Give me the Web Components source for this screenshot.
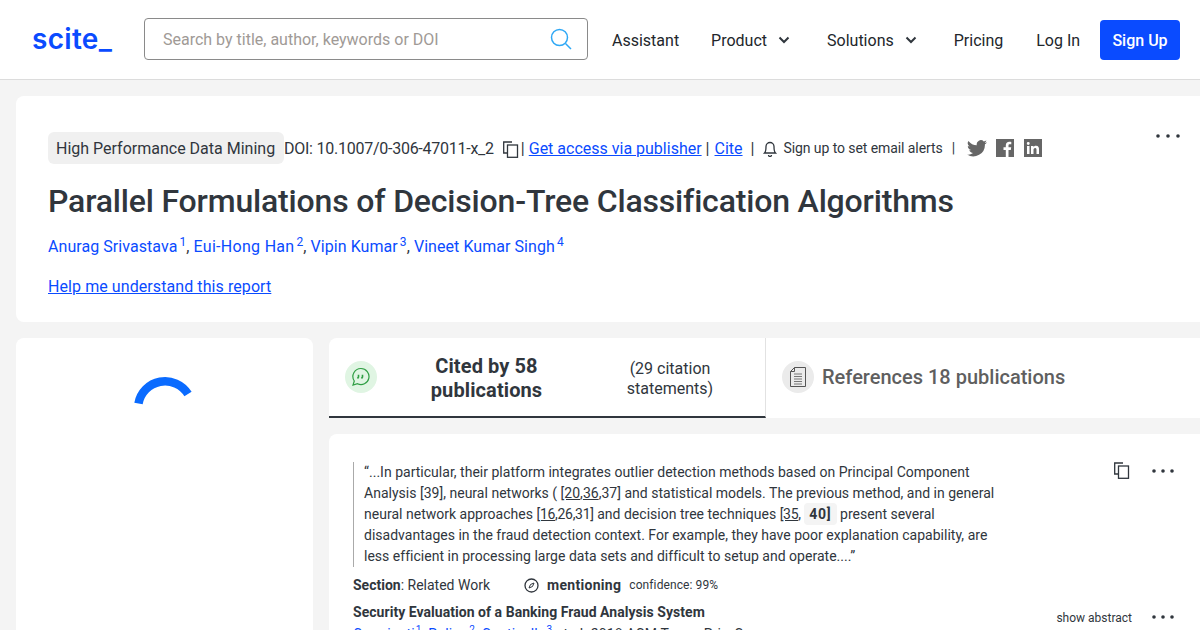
<!DOCTYPE html>
<html>
<head>
<meta charset="utf-8">
<title>scite</title>
<style>
  html, body { margin: 0; height: 630px; overflow: hidden; background: #f4f4f4; }
  body { font-family: Roboto, "Liberation Sans", sans-serif; color: #30363d; }
  .main { display: flex; flex-direction: column; gap: 16px; padding: 16px 0 0 16px; }
  .lower { display: flex; gap: 16px; align-items: flex-start; }
  .right { width: 871px; display: flex; flex-direction: column; gap: 16px; }
</style>
</head>
<body>
<site-header></site-header>
<div class="main">
  <paper-card></paper-card>
  <div class="lower">
    <loading-panel></loading-panel>
    <div class="right">
      <cite-tabs></cite-tabs>
      <citation-card></citation-card>
    </div>
  </div>
</div>

<script>
// Shared icons
const dots = (gap) => `<svg width="26" height="6" viewBox="0 0 26 6" fill="#30363d"><circle cx="${13 - gap}" cy="3" r="1.800"/><circle cx="13" cy="3" r="1.800"/><circle cx="${13 + gap}" cy="3" r="1.800"/></svg>`;
const chevron = `<svg width="14" height="10" viewBox="0 0 14 10" fill="none" stroke="#30363d" stroke-width="2"><path d="M2.500 2.500 7 7l4.500-4.500"/></svg>`;
const copyIcon = `<svg width="17" height="17" viewBox="0 0 17 17" fill="none" stroke="#30363d" stroke-width="1.300"><path d="M10 1H1.700v11H5"/><rect x="5.500" y="4" width="10" height="12.300"/></svg>`;

class SiteHeader extends HTMLElement {
    constructor() {
        super();
        this.attachShadow({ mode: "open" });
        this.shadowRoot.innerHTML = `
        <style>
            :host { display: flex; align-items: center; height: 79px; background: #fff; border-bottom: 1px solid #dcdcdc; padding: 0 20px 0 32px; color: #22262b; font-size: 16px; }
            .logo { width: 112px; font: 600 28px/1 Inter, sans-serif; letter-spacing: .3px; color: #0a4bff; margin-top: -1px; }
            .search { width: 444px; height: 42px; margin-top: -1px; box-sizing: border-box; border: 1px solid #8a8a8a; border-radius: 4px; display: flex; align-items: center; justify-content: space-between; padding: 0 15px 0 18px; color: #a09a96; }
            nav { display: flex; align-items: center; margin-left: 24px; padding-top: 1px; flex: 1; }
            nav span { display: flex; align-items: center; gap: 10px; }
            .btn { margin-left: auto; width: 80px; height: 40px; border-radius: 4px; background: #0a4bff; color: #fff; font-weight: 500; display: flex; align-items: center; justify-content: center; }
        </style>
        <div class="logo">scite_</div>
        <div class="search">
            <span>Search by title, author, keywords or DOI</span>
            <svg width="22" height="22" viewBox="0 0 22 22" fill="none" stroke="#2fa8f5" stroke-width="1.500"><circle cx="9.500" cy="9.500" r="8"/><path d="M15.500 15.500 21 21"/></svg>
        </div>
        <nav>
            <span>Assistant</span>
            <span style="margin-left:32px">Product ${chevron}</span>
            <span style="margin-left:36px">Solutions ${chevron}</span>
            <span style="margin-left:36px">Pricing</span>
            <span style="margin-left:33px">Log In</span>
            <div class="btn">Sign Up</div>
        </nav>
        `;
    }
}

class PaperCard extends HTMLElement {
    constructor() {
        super();
        this.attachShadow({ mode: "open" });
        this.shadowRoot.innerHTML = `
        <style>
            :host { display: block; position: relative; height: 226px; box-sizing: border-box; background: #fff; border-radius: 8px 0 0 8px; padding: 36px 32px 0; font-size: 16px; }
            a { color: #0a4bff; }
            .meta { display: flex; align-items: center; height: 32px; white-space: nowrap; }
            .tag { background: #f0f0f0; border-radius: 6px; padding: 0 8px; width: 236px; box-sizing: border-box; height: 32px; line-height: 33px; }
            .doi { letter-spacing: -.25px; }
            .small { font-size: 14px; letter-spacing: -.08px; }
            .sep { margin: 0 5px 0 4px; }
            .social { display: flex; gap: 9px; align-items: center; margin-left: 12px; }
            h1 { margin: 17px 0 0; font-size: 32px; line-height: 40px; font-weight: 500; color: #30363d; white-space: nowrap; letter-spacing: -.175px; }
            .authors { margin-top: 14px; line-height: 24px; color: #30363d; letter-spacing: .06px; }
            .authors a { text-decoration: none; }
            sup { font-size: 12px; line-height: 0; color: #0a4bff; margin-left: 2px; }
            .help { display: block; margin-top: 16px; line-height: 24px; letter-spacing: .08px; }
            .more { position: absolute; right: 19px; top: 37px; display: flex; }
        </style>
        <div class="meta">
            <span class="tag">High Performance Data Mining</span>
            <span class="doi">DOI: 10.1007/0-306-47011-x_2</span>
            <span style="margin:2px 2px 0 8px;display:flex">${copyIcon}</span>
            <span>|</span>
            <a href="#" style="margin-left:4px">Get access via publisher</a>
            <span class="sep">|</span>
            <a href="#">Cite</a>
            <span style="margin:0 8px 0 8px">|</span>
            <svg width="16" height="18" viewBox="0 0 16 18" fill="none" stroke="#30363d" stroke-width="1.300"><path d="M2.500 14c1.500-1.500 1.500-3 1.500-6.500a4 4 0 0 1 8 0c0 3.500 0 5 1.500 6.500z"/><path d="M6.500 16a1.500 1.500 0 0 0 3 0"/></svg>
            <span class="small" style="margin-left:5px">Sign up to set email alerts</span>
            <span class="small" style="margin-left:9px">|</span>
            <div class="social">
                <svg width="20" height="17" viewBox="0 0 24 20" fill="#666"><path d="M24 2.400a9.800 9.800 0 0 1-2.800.8A4.900 4.900 0 0 0 23.300.5a9.800 9.800 0 0 1-3.100 1.200 4.900 4.900 0 0 0-8.400 4.500A14 14 0 0 1 1.700.9a4.900 4.900 0 0 0 1.500 6.600 4.900 4.900 0 0 1-2.200-.6 4.900 4.900 0 0 0 3.900 4.900 4.900 4.900 0 0 1-2.200.1 4.900 4.900 0 0 0 4.600 3.400A9.900 9.900 0 0 1 0 17.300 14 14 0 0 0 21.500 4.900 10 10 0 0 0 24 2.400z"/></svg>
                <svg width="18" height="18" viewBox="0 0 18 18"><rect width="18" height="18" fill="#666"/><path d="M12.500 18v-7h2.300l.4-2.700h-2.700V6.600c0-.8.300-1.300 1.400-1.300h1.400V2.900c-.3 0-1.100-.1-2-.1-2.100 0-3.500 1.300-3.500 3.600v1.900H7.500V11h2.300v7z" fill="#fff"/></svg>
                <svg width="18" height="18" viewBox="0 0 18 18" style="margin-left:1px"><rect width="18" height="18" fill="#666"/><path d="M3 7h2.500v8H3zM4.250 3a1.450 1.450 0 1 1 0 2.900 1.450 1.450 0 0 1 0-2.900zM7 7h2.400v1.100c.4-.7 1.300-1.300 2.600-1.300 2.600 0 3 1.700 3 3.900V15h-2.500v-3.800c0-1 0-2.200-1.300-2.200s-1.700 1-1.700 2.100V15H7z" fill="#fff"/></svg>
            </div>
        </div>
        <h1>Parallel Formulations of Decision-Tree Classification Algorithms</h1>
        <div class="authors">
            <a href="#">Anurag Srivastava</a><sup>1</sup>, <a href="#" style="letter-spacing:.3px">Eui-Hong Han</a><sup>2</sup>, <a href="#">Vipin Kumar</a><sup>3</sup>, <a href="#">Vineet Kumar Singh</a><sup>4</sup>
        </div>
        <a class="help" href="#">Help me understand this report</a>
        <div class="more">${dots(10)}</div>
        `;
    }
}

class LoadingPanel extends HTMLElement {
    constructor() {
        super();
        this.attachShadow({ mode: "open" });
        this.shadowRoot.innerHTML = `
        <style>
            :host { display: flex; justify-content: center; width: 297px; height: 300px; flex: none; background: #fff; border-radius: 8px 8px 0 0; padding-top: 34px; box-sizing: border-box; }
            svg { flex: none; }
        </style>
        <svg width="66" height="40" viewBox="0 0 66 40" fill="none" stroke="#0a6bff" stroke-width="8.500"><path d="M6.500 31.500A27 27 0 0 1 56 22"/></svg>
        `;
    }
}

class CiteTabs extends HTMLElement {
    constructor() {
        super();
        this.attachShadow({ mode: "open" });
        this.shadowRoot.innerHTML = `
        <style>
            :host { display: flex; height: 80px; background: #fff; border-radius: 8px 0 0 0; }
            .tab { display: flex; align-items: center; box-sizing: border-box; }
            .on { width: 437px; padding-left: 16px; border-bottom: 2px solid #30363d; border-right: 1px solid #e2e2e2; }
            .badge { width: 32px; height: 32px; border-radius: 50%; display: flex; align-items: center; justify-content: center; flex: none; }
            .count { width: 187px; text-align: center; font-size: 20px; line-height: 24px; font-weight: 700; margin-left: 16px; padding-top: 1px; letter-spacing: .1px; }
            .note { width: 150px; text-align: center; font-size: 16px; line-height: 20px; margin-left: 15px; padding-top: 3px; }
            .off { padding-left: 16px; color: #5f5f5f; font-size: 20px; font-weight: 500; gap: 8px; padding-bottom: 2px; }
        </style>
        <div class="tab on">
            <div class="badge" style="background:#e0f5e3">
                <svg width="20" height="20" viewBox="0 0 20 20" fill="none" stroke="#2f9e44" stroke-width="1.200"><path d="M10 1.500a8 8 0 1 1-3.500 15.200L2 18l1.300-4A8 8 0 0 1 10 1.500z"/><path d="M7.500 7.800v2.200l-1 1.500M11.500 7.800v2.200l-1 1.500" stroke-width="1.600"/></svg>
            </div>
            <div class="count">Cited by 58 publications</div>
            <div class="note">(29 citation statements)</div>
        </div>
        <div class="tab off">
            <div class="badge" style="background:#ebebeb">
                <svg width="18" height="22" viewBox="0 0 18 22" fill="none" stroke="#555" stroke-width="1"><path d="M5.500 1.500H16.500V20.500H1.500V5.500z"/><path d="M5.500 1.500V5.500H1.500"/><path d="M5 8h8M5 10.500h8M5 13h8M5 15.500h8M5 18h8" stroke="#777"/></svg>
            </div>
            <span>References 18 publications</span>
        </div>
        `;
    }
}

class CitationCard extends HTMLElement {
    constructor() {
        super();
        this.attachShadow({ mode: "open" });
        this.shadowRoot.innerHTML = `
        <style>
            :host { display: block; position: relative; height: 260px; box-sizing: border-box; background: #fff; border-radius: 8px 0 0 0; padding: 28px 24px 0; font-size: 14px; color: #30363d; }
            blockquote { margin: 0; width: 644px; border-left: 1px solid #aaa; padding-left: 10px; line-height: 21px; letter-spacing: .015px; }
            u { text-underline-offset: 1px; }
            .tight { letter-spacing: -.3px; }
            .hl { background: #f4f4f4; border-radius: 4px; font-weight: 700; padding: 3px 5px; letter-spacing: .8px; }
            .meta { display: flex; align-items: center; margin-top: 8px; line-height: 21px; }
            .tally { display: flex; align-items: center; margin-left: 32px; }
            .tally b { letter-spacing: .3px; }
            .conf { font-size: 12px; margin-left: 8px; letter-spacing: .1px; }
            .title { font-weight: 700; margin-top: 6px; line-height: 21px; letter-spacing: .04px; }
            .who { line-height: 21px; margin-top: 1px; white-space: nowrap; letter-spacing: .15px; }
            .who a { color: #0a4bff; text-decoration: underline; }
            sup { font-size: 10px; line-height: 0; color: #0a4bff; margin-left: 1px; }
            .abs { position: absolute; right: 68px; top: 177px; font-size: 12px; }
            .copy { position: absolute; right: 70px; top: 28px; display: flex; }
            .m1 { position: absolute; right: 24px; top: 34px; display: flex; }
            .m2 { position: absolute; right: 24px; top: 180px; display: flex; }
        </style>
        <blockquote>“...In particular, their platform integrates outlier detection methods based on Principal Component Analysis [39], neural networks ( <u>[20</u>,<u>36</u>,37] and statistical models. The previous method, and in general neural network approaches <span class="tight"><u>[16</u>,26,31]</span> and decision tree techniques <span class="tight"><u>[35</u>,</span> <span class="hl">40]</span> present several disadvantages in the fraud detection context. For example, they have poor explanation capability, are less efficient in processing large data sets and difficult to setup and operate....”</blockquote>
        <div class="meta">
            <span><b>Section</b>: Related Work</span>
            <div class="tally">
                <svg width="15" height="15" viewBox="0 0 15 15" fill="none" stroke="#30363d" stroke-width="1.300" style="margin-right:8px;margin-left:2px"><circle cx="7.500" cy="7.500" r="6.500"/><path d="M5 10l1.500-3.500L10 5 8.500 8.500z" stroke-width="1"/></svg>
                <b>mentioning</b><span class="conf">confidence: 99%</span>
            </div>
        </div>
        <div class="title">Security Evaluation of a Banking Fraud Analysis System</div>
        <div class="who"><a>Carminati</a><sup>1</sup>, <a>Polino</a><sup>2</sup>, <a>Continella</a><sup>3</sup> et al. 2018 ACM Trans. Priv. Secur.</div>
        <div class="copy">${copyIcon}</div>
        <div class="m1">${dots(9)}</div>
        <div class="abs">show abstract</div>
        <div class="m2">${dots(9)}</div>
        `;
    }
}

customElements.define("site-header", SiteHeader);
customElements.define("paper-card", PaperCard);
customElements.define("loading-panel", LoadingPanel);
customElements.define("cite-tabs", CiteTabs);
customElements.define("citation-card", CitationCard);
</script>
</body>
</html>
